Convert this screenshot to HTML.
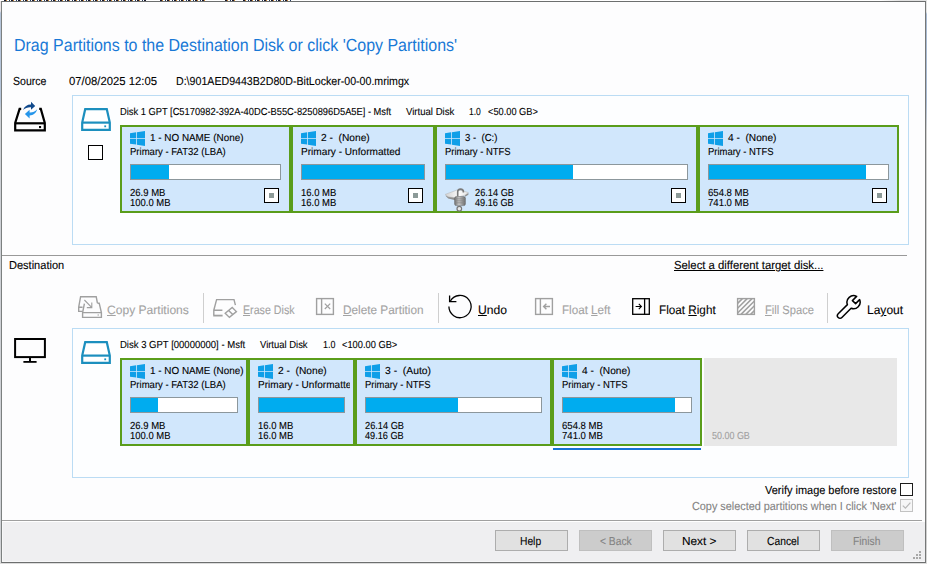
<!DOCTYPE html>
<html lang="en">
<head>
<meta charset="utf-8">
<title>Drag Partitions to the Destination Disk</title>
<style>
html,body{margin:0;padding:0}
body{width:927px;height:564px;overflow:hidden;background:#e6e6e6;font-family:'Liberation Sans',sans-serif;text-rendering:geometricPrecision}
#app{position:relative;width:927px;height:564px;overflow:hidden;background:#dfe1e4}
#app>*{position:absolute}
#app span{position:absolute;white-space:pre;display:block;transform-origin:0 0;-webkit-text-stroke:0.1px currentColor}
u{text-decoration:underline;text-underline-offset:1px}
.title{-webkit-text-stroke:0 !important}
.clip{overflow:hidden}
.link{text-decoration:underline;text-underline-offset:1px}
.top-junk{left:0;top:0;width:927px;height:1px;background:linear-gradient(90deg,#fff 0,#fff 880px,#e2e2e2 900px)}
.top-junk i{position:absolute;top:0;height:1px;background:repeating-linear-gradient(90deg,#1a1a2e 0,#1a1a2e 2px,#c9842f 2px,#c9842f 3px,#fff 3px,#fff 5px,#23395d 5px,#23395d 6px,#fff 6px,#fff 7px)}
.edge-l{left:0;top:1px;width:1px;height:563px;background:linear-gradient(180deg,#ebe4e6 0,#ebe4e6 10px,#b5c4d9 12px,#b5c4d9 100px,#cdd0d5 110px,#cfd1d5 540px,#dcdcdc 100%)}
.edge-r{left:926px;top:1px;width:1px;height:563px;background:linear-gradient(180deg,#e2e2e2 0,#e2e2e2 11px,#a9bbd3 13px,#a9bbd3 100px,#cfcfcf 130px,#cfcfcf 540px,#d8d8d8 560px)}
.edge-b{left:0;top:563px;width:927px;height:1px;background:#dcdcdc}
.win-frame{left:1px;top:1px;width:923px;height:560px;border:1px solid #6d6f6f;border-left-color:#7c8080;border-right-color:#767878;background:#fdfdfe}
.footer-bg{left:2px;top:521px;width:923px;height:41px;background:#efeff1;box-shadow:inset 0 1px 0 #fff,inset 1px -1px 0 #f7f7f8}
.panel{border:1px solid #bbdcf4;background:#fdfeff}
.part{height:84px;border:2px solid #5a9d1b;background:#d1e7fc}
.bar{height:14px;border:1px solid #8c979c;background:#fff}
.bar i{display:block;height:14px;background:#00acef}
.chk{width:13px;height:13px;border:1px solid #000;background:#fff}
.chk13{width:11px;height:11px;border:1px solid #1c1c1c;background:#fff}
.chk13.dis{border-color:#c2c2c2;background:#f6f6f7}
.chk13 svg{display:block}
.mchk{width:13px;height:13px;border:1px solid #000;background:#fff}
.mchk i{position:absolute;left:4px;top:4px;width:5px;height:5px;background:#8c9a98}
.hline{height:1px}
.vsep{top:293px;width:1px;height:30px;background:#cfcfcf}
.free{background:#e8e8e8}
.btn{top:530px;width:71px;height:19px;border:1px solid #adadad;background:#e1e1e1}
.btn.dis{border-color:#bfbfbf;background:#cccccc}
.grip{left:913px;top:551px;width:9px;height:9px}
.grip i{position:absolute;width:2px;height:2px;background:#a8a8a8}
.grip i:nth-child(1){left:6px;top:0}
.grip i:nth-child(2){left:3px;top:3px}
.grip i:nth-child(3){left:6px;top:3px}
.grip i:nth-child(4){left:0;top:6px}
.grip i:nth-child(5){left:3px;top:6px}
.grip i:nth-child(6){left:6px;top:6px}
.win{display:block}
</style>
</head>
<body>
<div id="app">
<div class="top-junk"><i style="left:4px;width:142px"></i><i style="left:160px;width:47px"></i><i style="left:225px;width:12px"></i><i style="left:243px;width:49px"></i></div>
<div class="edge-l"></div>
<div class="edge-r"></div>
<div class="edge-b"></div>
<div class="win-frame"></div>
<div class="footer-bg"></div>
<span class="title" style="left:13.53px;top:34px;font-size:17.5px;line-height:23px;transform:scaleX(0.9133);color:#1878d6">Drag Partitions to the Destination Disk or click 'Copy Partitions'</span>
<span style="left:13.05px;top:74px;font-size:11.6px;line-height:15px;transform:scaleX(0.9091);color:#000">Source</span>
<span style="left:69.01px;top:74px;font-size:11.6px;line-height:15px;transform:scaleX(0.9748);color:#000">07/08/2025 12:05</span>
<span style="left:176.08px;top:74px;font-size:11.6px;line-height:15px;transform:scaleX(0.9161);color:#000">D:\901AED9443B2D80D-BitLocker-00-00.mrimgx</span>
<svg class="abs" style="left:14px;top:101px" width="33" height="31" viewBox="0 0 33 31"><path d="M7.2 7.9H5.6L1.2 22V29.4H30.8V22L26.8 7.9H25.2" fill="none" stroke="#000" stroke-width="2.2"/><path d="M1.2 22.3H30.8" stroke="#000" stroke-width="2.2"/><rect x="25" y="25" width="2.1" height="2.1" fill="#000"/><path d="M9.1 8.9C10.4 5.2 13.4 3.3 17 3.4V0.8L21.2 5 17 8.8V6.3C14 6 11.5 7 9.1 8.9Z" fill="#10498c"/><path d="M23.2 8.3C22 12.4 19 14.6 15.6 14.5V17.4L10.9 12.9 15.6 8.8V11.6C18.5 11.8 21 10.6 23.2 8.3Z" fill="#2595ea"/></svg>
<div class="panel" style="left:72px;top:95px;width:835px;height:148px"></div>
<svg class="abs" style="left:81px;top:108px" width="30" height="23" viewBox="0 0 30 23"><path d="M4.2 1.2H25.8L28.8 14.5V21.8H1.2V14.5Z" fill="#fff" stroke="#1c8fbe" stroke-width="2.2" stroke-linejoin="miter"/><path d="M1.2 14.6H28.8" stroke="#1c8fbe" stroke-width="2.2"/><rect x="23.3" y="17.4" width="1.8" height="1.8" fill="#1c8fbe"/></svg>
<div class="chk" style="left:88px;top:145px"></div>
<span style="left:119.81px;top:106px;font-size:10.2px;line-height:13px;transform:scaleX(0.9146);color:#000">Disk 1 GPT [C5170982-392A-40DC-B55C-8250896D5A5E] - Msft</span>
<span style="left:406.00px;top:106px;font-size:10.2px;line-height:13px;transform:scaleX(0.9405);color:#000">Virtual Disk</span>
<span style="left:469.47px;top:106px;font-size:10.2px;line-height:13px;transform:scaleX(0.8385);color:#000">1.0</span>
<span style="left:487.55px;top:106px;font-size:10.2px;line-height:13px;transform:scaleX(0.9074);color:#000">&lt;50.00 GB&gt;</span>
<div class="part" style="left:120px;top:125px;width:167px"></div>
<div class="abs" style="left:130px;top:131px"><svg class="win" width="15" height="15" viewBox="0 0 15 15"><path fill="#0f9fe8" d="M0 2.2 6.1 1.3V7H0zM6.9 1.2 15 0V7H6.9zM0 7.8H6.1V13.6L0 12.7zM6.9 7.8H15V15L6.9 13.8z"/></svg></div>
<span style="left:149.77px;top:132px;font-size:10.2px;line-height:13px;transform:scaleX(0.9710);color:#000">1 - NO NAME (None)</span>
<span style="left:129.80px;top:146px;font-size:10.2px;line-height:13px;transform:scaleX(0.9356);color:#000">Primary - FAT32 (LBA)</span>
<div class="bar" style="left:130px;top:164px;width:149px"><i style="width:38px"></i></div>
<span style="left:129.53px;top:187px;font-size:10.2px;line-height:13px;transform:scaleX(0.9324);color:#000">26.9 MB</span>
<span style="left:130.10px;top:197px;font-size:10.2px;line-height:13px;transform:scaleX(0.9278);color:#000">100.0 MB</span>
<div class="mchk" style="left:264px;top:188px"><i></i></div>
<div class="part" style="left:291px;top:125px;width:140px"></div>
<div class="abs" style="left:301px;top:131px"><svg class="win" width="15" height="15" viewBox="0 0 15 15"><path fill="#0f9fe8" d="M0 2.2 6.1 1.3V7H0zM6.9 1.2 15 0V7H6.9zM0 7.8H6.1V13.6L0 12.7zM6.9 7.8H15V15L6.9 13.8z"/></svg></div>
<span style="left:321.00px;top:132px;font-size:10.2px;line-height:13px;transform:scaleX(1.0000);color:#000">2 -  (None)</span>
<span style="left:300.76px;top:146px;font-size:10.2px;line-height:13px;transform:scaleX(0.9924);color:#000">Primary - Unformatted</span>
<div class="bar" style="left:301px;top:164px;width:122px"><i style="width:122px"></i></div>
<span style="left:301.10px;top:187px;font-size:10.2px;line-height:13px;transform:scaleX(0.9306);color:#000">16.0 MB</span>
<span style="left:301.10px;top:197px;font-size:10.2px;line-height:13px;transform:scaleX(0.9306);color:#000">16.0 MB</span>
<div class="mchk" style="left:408px;top:188px"><i></i></div>
<div class="part" style="left:435px;top:125px;width:259px"></div>
<div class="abs" style="left:445px;top:131px"><svg class="win" width="15" height="15" viewBox="0 0 15 15"><path fill="#0f9fe8" d="M0 2.2 6.1 1.3V7H0zM6.9 1.2 15 0V7H6.9zM0 7.8H6.1V13.6L0 12.7zM6.9 7.8H15V15L6.9 13.8z"/></svg></div>
<span style="left:465.03px;top:132px;font-size:10.2px;line-height:13px;transform:scaleX(0.9403);color:#000">3 -  (C:)</span>
<span style="left:444.80px;top:146px;font-size:10.2px;line-height:13px;transform:scaleX(0.9281);color:#000">Primary - NTFS</span>
<div class="bar" style="left:445px;top:164px;width:241px"><i style="width:127px"></i></div>
<span style="left:474.55px;top:187px;font-size:10.2px;line-height:13px;transform:scaleX(0.9048);color:#000">26.14 GB</span>
<span style="left:474.78px;top:197px;font-size:10.2px;line-height:13px;transform:scaleX(0.8994);color:#000">49.16 GB</span>
<svg class="abs" style="left:445px;top:188px" width="24" height="24" viewBox="0 0 24 24"><defs><linearGradient id="lg" x1="0" x2="1" y1="0" y2="0"><stop offset="0" stop-color="#6f6f6f"/><stop offset="0.4" stop-color="#c8c8c8"/><stop offset="1" stop-color="#6a6a6a"/></linearGradient><linearGradient id="lt" x1="0" x2="1" y1="0" y2="0"><stop offset="0" stop-color="#d2d2d2"/><stop offset="0.6" stop-color="#fbfbfb"/><stop offset="1" stop-color="#e2e2e2"/></linearGradient></defs><path d="M0.3 7.6 3.2 10.6 10.4 12.2V9.4ZM20 8.8 23.4 6.8V5L20 6.6Z" fill="#8f8f8f"/><path d="M0.2 6.4 11.6 2.2 16.4 2.4 23.4 4.6 20 7.2 10.6 9.8 3 8.8Z" fill="url(#lt)" stroke="#b4b4b4" stroke-width="0.5"/><path d="M12.7 8.6V3.8C12.7 0.2 18.4 0.2 18.4 3.8V4.6" fill="none" stroke="#7b7b7b" stroke-width="1.6"/><rect x="9.6" y="8.6" width="10.8" height="9" rx="1.6" fill="url(#lg)" stroke="#666" stroke-width="0.5"/><path d="M9.8 10.8H20.2M9.8 12.8H20.2M9.8 14.8H20.2" stroke="#858585" stroke-width="0.7"/><circle cx="14.3" cy="20.7" r="2.3" fill="#e9e9e9" stroke="#777" stroke-width="1.2"/></svg>
<div class="mchk" style="left:671px;top:188px"><i></i></div>
<div class="part" style="left:698px;top:125px;width:197px"></div>
<div class="abs" style="left:708px;top:131px"><svg class="win" width="15" height="15" viewBox="0 0 15 15"><path fill="#0f9fe8" d="M0 2.2 6.1 1.3V7H0zM6.9 1.2 15 0V7H6.9zM0 7.8H6.1V13.6L0 12.7zM6.9 7.8H15V15L6.9 13.8z"/></svg></div>
<span style="left:728.25px;top:132px;font-size:10.2px;line-height:13px;transform:scaleX(0.9948);color:#000">4 -  (None)</span>
<span style="left:707.80px;top:146px;font-size:10.2px;line-height:13px;transform:scaleX(0.9281);color:#000">Primary - NTFS</span>
<div class="bar" style="left:708px;top:164px;width:179px"><i style="width:157px"></i></div>
<span style="left:707.53px;top:187px;font-size:10.2px;line-height:13px;transform:scaleX(0.9388);color:#000">654.8 MB</span>
<span style="left:707.53px;top:197px;font-size:10.2px;line-height:13px;transform:scaleX(0.9388);color:#000">741.0 MB</span>
<div class="mchk" style="left:872px;top:188px"><i></i></div>
<div class="hline" style="left:2px;top:255px;width:905px;background:#999"></div>
<span style="left:8.55px;top:258px;font-size:11.6px;line-height:15px;transform:scaleX(0.9511);color:#000">Destination</span>
<span class="link" style="left:673.61px;top:258px;font-size:11.6px;line-height:15px;transform:scaleX(0.9756);color:#000">Select a different target disk...</span>
<span style="left:107.26px;top:302px;font-size:12.2px;line-height:16px;transform:scaleX(0.9902);color:#a3a3a3"><u>C</u>opy Partitions</span>
<span style="left:243.13px;top:302px;font-size:12.2px;line-height:16px;transform:scaleX(0.8745);color:#a3a3a3"><u>E</u>rase Disk</span>
<span style="left:343.03px;top:302px;font-size:12.2px;line-height:16px;transform:scaleX(0.9669);color:#a3a3a3"><u>D</u>elete Partition</span>
<span style="left:478.01px;top:302px;font-size:12.2px;line-height:16px;transform:scaleX(0.9946);color:#000"><u>U</u>ndo</span>
<span style="left:562.05px;top:302px;font-size:12.2px;line-height:16px;transform:scaleX(0.9548);color:#a3a3a3">Float <u>L</u>eft</span>
<span style="left:658.54px;top:302px;font-size:12.2px;line-height:16px;transform:scaleX(0.9610);color:#000">Float <u>R</u>ight</span>
<span style="left:764.59px;top:302px;font-size:12.2px;line-height:16px;transform:scaleX(0.9135);color:#a3a3a3"><u>F</u>ill Space</span>
<span style="left:866.51px;top:302px;font-size:12.2px;line-height:16px;transform:scaleX(0.9859);color:#000">La<u>y</u>out</span>
<div class="vsep" style="left:203px"></div>
<div class="vsep" style="left:438px"></div>
<div class="vsep" style="left:827px"></div>
<svg class="abs" style="left:77px;top:295px" width="26" height="24" viewBox="77 295 26 24" fill="none" stroke="#a0a0a0" stroke-width="1.4">
<path d="M97.4 303 96.2 296.7H80.6L78.7 307V311.4H82.4M78.7 307.2H82.6"/>
<path d="M97.4 303.2H99.2L101.4 312.6V317.4H82.6V312.6L84.4 303.6M82.6 312.6H101.4"/>
<path d="M84.4 300 91.6 307.4M91.8 302.6V307.6H86.8" stroke-width="1.1"/>
<rect x="97.6" y="314.4" width="1.2" height="1.2" fill="#a0a0a0" stroke="none"/>
</svg>
<svg class="abs" style="left:212px;top:297px" width="26" height="22" viewBox="212 297 26 22" fill="none" stroke="#a0a0a0" stroke-width="1.4">
<path d="M235.4 305.2 234 299.6H216.6L213.8 310.2V315.2M213.8 310.2H222.4"/>
<path d="M213.2 315.6H222.6" stroke-width="1.8"/>
<path d="M225.2 313.2 232.2 307.4 236.4 311.6 229.4 317.4ZM228.6 310.4 232.8 314.6"/>
</svg>
<svg class="abs" style="left:315px;top:297px" width="20" height="19" viewBox="315 297 20 19" fill="none" stroke="#a0a0a0" stroke-width="1.4">
<rect x="316.6" y="298.6" width="16.8" height="15.8"/>
<path d="M321.6 298.6V314.4"/>
<path d="M324.8 303.6 330.2 309M330.2 303.6 324.8 309" stroke-width="1.2"/>
</svg>
<svg class="abs" style="left:446px;top:293px" width="28" height="27" viewBox="446 293 28 27" fill="none" stroke="#000" stroke-width="1.3">
<path d="M448.9 306.6A11.1 11.1 0 1 0 450.4 301"/>
<path d="M449.6 295.6V301.6H456.4"/>
</svg>
<svg class="abs" style="left:534px;top:297px" width="20" height="19" viewBox="534 297 20 19" fill="none" stroke="#a0a0a0" stroke-width="1.4">
<rect x="535.6" y="298.6" width="16.8" height="15.8"/>
<path d="M540.4 298.6V314.4"/>
<path d="M550 306.5H543.6M546.4 303.7 543.6 306.5 546.4 309.3" stroke-width="1.4"/>
</svg>
<svg class="abs" style="left:631px;top:297px" width="20" height="19" viewBox="631 297 20 19" fill="none" stroke="#000" stroke-width="1.3">
<rect x="632.7" y="298.7" width="16.6" height="15.6"/>
<path d="M644.6 298.6V314.4"/>
<path d="M635.6 306.5H641.4M638.8 303.9 641.4 306.5 638.8 309.1" stroke-width="1.1"/>
</svg>
<svg class="abs" style="left:736px;top:297px" width="20" height="19" viewBox="736 297 20 19" fill="none" stroke="#a0a0a0" stroke-width="1.4">
<rect x="737.6" y="298.6" width="16.8" height="15.8"/>
<path d="M737.6 303.4 742.4 298.6M737.6 308.2 747.2 298.6M737.6 313 752 298.6M741 314.4 754.4 301M745.8 314.4 754.4 305.8M750.6 314.4 754.4 310.6" stroke-width="1.5"/>
</svg>
<svg class="abs" style="left:836px;top:293px" width="27" height="27" viewBox="836 293 27 27" fill="none" stroke="#000" stroke-width="1.5" stroke-linejoin="round" stroke-linecap="round">
<path d="M856.6 296.4A6.6 6.6 0 0 0 847.4 304.6L838.2 313.8A2.6 2.6 0 0 0 841.9 317.5L851.1 308.3A6.6 6.6 0 0 0 859.6 299.6L855.6 303.6 852.4 300.6Z"/>
</svg>
<div class="panel" style="left:72px;top:328px;width:835px;height:148px"></div>
<svg class="abs" style="left:14px;top:337px" width="33" height="27" viewBox="0 0 33 27"><rect x="1.1" y="2" width="29.8" height="18.1" fill="none" stroke="#000" stroke-width="2"/><path d="M16 21V24.4" stroke="#000" stroke-width="2" fill="none"/><path d="M9.4 24.9H22.6" stroke="#000" stroke-width="1.8" fill="none"/></svg>
<svg class="abs" style="left:81px;top:341px" width="30" height="23" viewBox="0 0 30 23"><path d="M4.2 1.2H25.8L28.8 14.5V21.8H1.2V14.5Z" fill="#fff" stroke="#1c8fbe" stroke-width="2.2" stroke-linejoin="miter"/><path d="M1.2 14.6H28.8" stroke="#1c8fbe" stroke-width="2.2"/><rect x="23.3" y="17.4" width="1.8" height="1.8" fill="#1c8fbe"/></svg>
<span style="left:119.80px;top:339px;font-size:10.2px;line-height:13px;transform:scaleX(0.9343);color:#000">Disk 3 GPT [00000000] - Msft</span>
<span style="left:260.00px;top:339px;font-size:10.2px;line-height:13px;transform:scaleX(0.9268);color:#000">Virtual Disk</span>
<span style="left:322.94px;top:339px;font-size:10.2px;line-height:13px;transform:scaleX(0.8769);color:#000">1.0</span>
<span style="left:341.54px;top:339px;font-size:10.2px;line-height:13px;transform:scaleX(0.9121);color:#000">&lt;100.00 GB&gt;</span>
<div class="free" style="left:704px;top:358px;width:193px;height:88px"></div>
<span style="left:712.16px;top:430px;font-size:10.2px;line-height:13px;transform:scaleX(0.8786);color:#a0a0a0">50.00 GB</span>
<div class="part" style="left:120px;top:358px;width:124px"></div>
<div class="abs" style="left:130px;top:364px"><svg class="win" width="15" height="15" viewBox="0 0 15 15"><path fill="#0f9fe8" d="M0 2.2 6.1 1.3V7H0zM6.9 1.2 15 0V7H6.9zM0 7.8H6.1V13.6L0 12.7zM6.9 7.8H15V15L6.9 13.8z"/></svg></div>
<span style="left:149.77px;top:365px;font-size:10.2px;line-height:13px;transform:scaleX(0.9710);color:#000">1 - NO NAME (None)</span>
<span style="left:129.80px;top:379px;font-size:10.2px;line-height:13px;transform:scaleX(0.9356);color:#000">Primary - FAT32 (LBA)</span>
<div class="bar" style="left:130px;top:397px;width:106px"><i style="width:27px"></i></div>
<span style="left:129.53px;top:420px;font-size:10.2px;line-height:13px;transform:scaleX(0.9324);color:#000">26.9 MB</span>
<span style="left:130.10px;top:430px;font-size:10.2px;line-height:13px;transform:scaleX(0.9278);color:#000">100.0 MB</span>
<div class="part" style="left:248px;top:358px;width:103px"></div>
<div class="abs" style="left:258px;top:364px"><svg class="win" width="15" height="15" viewBox="0 0 15 15"><path fill="#0f9fe8" d="M0 2.2 6.1 1.3V7H0zM6.9 1.2 15 0V7H6.9zM0 7.8H6.1V13.6L0 12.7zM6.9 7.8H15V15L6.9 13.8z"/></svg></div>
<span style="left:278.00px;top:365px;font-size:10.2px;line-height:13px;transform:scaleX(1.0000);color:#000">2 -  (None)</span>
<div class="clip" style="left:257px;top:379px;width:93.3px;height:13px">
<span style="left:0.76px;top:0;font-size:10.2px;line-height:13px;transform:scaleX(0.9873);color:#000">Primary - Unformatted</span></div>
<div class="bar" style="left:258px;top:397px;width:85px"><i style="width:85px"></i></div>
<span style="left:258.10px;top:420px;font-size:10.2px;line-height:13px;transform:scaleX(0.9306);color:#000">16.0 MB</span>
<span style="left:258.10px;top:430px;font-size:10.2px;line-height:13px;transform:scaleX(0.9306);color:#000">16.0 MB</span>
<div class="part" style="left:355px;top:358px;width:193px"></div>
<div class="abs" style="left:365px;top:364px"><svg class="win" width="15" height="15" viewBox="0 0 15 15"><path fill="#0f9fe8" d="M0 2.2 6.1 1.3V7H0zM6.9 1.2 15 0V7H6.9zM0 7.8H6.1V13.6L0 12.7zM6.9 7.8H15V15L6.9 13.8z"/></svg></div>
<span style="left:384.99px;top:365px;font-size:10.2px;line-height:13px;transform:scaleX(1.0169);color:#000">3 -  (Auto)</span>
<span style="left:364.80px;top:379px;font-size:10.2px;line-height:13px;transform:scaleX(0.9281);color:#000">Primary - NTFS</span>
<div class="bar" style="left:365px;top:397px;width:175px"><i style="width:92px"></i></div>
<span style="left:364.55px;top:420px;font-size:10.2px;line-height:13px;transform:scaleX(0.9048);color:#000">26.14 GB</span>
<span style="left:364.78px;top:430px;font-size:10.2px;line-height:13px;transform:scaleX(0.8994);color:#000">49.16 GB</span>
<div class="part" style="left:552px;top:358px;width:146px"></div>
<div class="abs" style="left:562px;top:364px"><svg class="win" width="15" height="15" viewBox="0 0 15 15"><path fill="#0f9fe8" d="M0 2.2 6.1 1.3V7H0zM6.9 1.2 15 0V7H6.9zM0 7.8H6.1V13.6L0 12.7zM6.9 7.8H15V15L6.9 13.8z"/></svg></div>
<span style="left:582.25px;top:365px;font-size:10.2px;line-height:13px;transform:scaleX(0.9948);color:#000">4 -  (None)</span>
<span style="left:561.80px;top:379px;font-size:10.2px;line-height:13px;transform:scaleX(0.9281);color:#000">Primary - NTFS</span>
<div class="bar" style="left:562px;top:397px;width:128px"><i style="width:112px"></i></div>
<span style="left:561.53px;top:420px;font-size:10.2px;line-height:13px;transform:scaleX(0.9388);color:#000">654.8 MB</span>
<span style="left:561.53px;top:430px;font-size:10.2px;line-height:13px;transform:scaleX(0.9388);color:#000">741.0 MB</span>
<div class="hline" style="left:553px;top:448px;width:148px;height:2px;background:#1672d4"></div>
<span style="left:764.50px;top:483px;font-size:11.6px;line-height:15px;transform:scaleX(0.9456);color:#000">Verify image before restore</span>
<div class="chk13" style="left:900px;top:483px"></div>
<span style="left:691.93px;top:499px;font-size:11.6px;line-height:15px;transform:scaleX(0.9358);color:#838383">Copy selected partitions when I click 'Next'</span>
<div class="chk13 dis" style="left:900px;top:499px"><svg width="11" height="11" viewBox="0 0 11 11"><path d="M1.8 5.6 4.4 8.2 9.4 2.6" fill="none" stroke="#b8b8b8" stroke-width="1.2"/></svg></div>
<div class="hline" style="left:2px;top:520px;width:920px;background:#a0a0a0"></div>
<div class="btn" style="left:495px"></div>
<span style="left:519.81px;top:534px;font-size:11.6px;line-height:15px;transform:scaleX(0.8854);color:#000">Help</span>
<div class="btn dis" style="left:579px"></div>
<span style="left:599.56px;top:534px;font-size:11.6px;line-height:15px;transform:scaleX(0.8879);color:#838383">&lt; Back</span>
<div class="btn" style="left:663px"></div>
<span style="left:681.68px;top:534px;font-size:11.6px;line-height:15px;transform:scaleX(1.0171);color:#000">Next &gt;</span>
<div class="btn" style="left:747px"></div>
<span style="left:766.66px;top:534px;font-size:11.6px;line-height:15px;transform:scaleX(0.8892);color:#000">Cancel</span>
<div class="btn dis" style="left:831px"></div>
<span style="left:853.21px;top:534px;font-size:11.6px;line-height:15px;transform:scaleX(0.8855);color:#838383">Finish</span>
<div class="grip"><i></i><i></i><i></i><i></i><i></i><i></i></div>
</div>
</body>
</html>
